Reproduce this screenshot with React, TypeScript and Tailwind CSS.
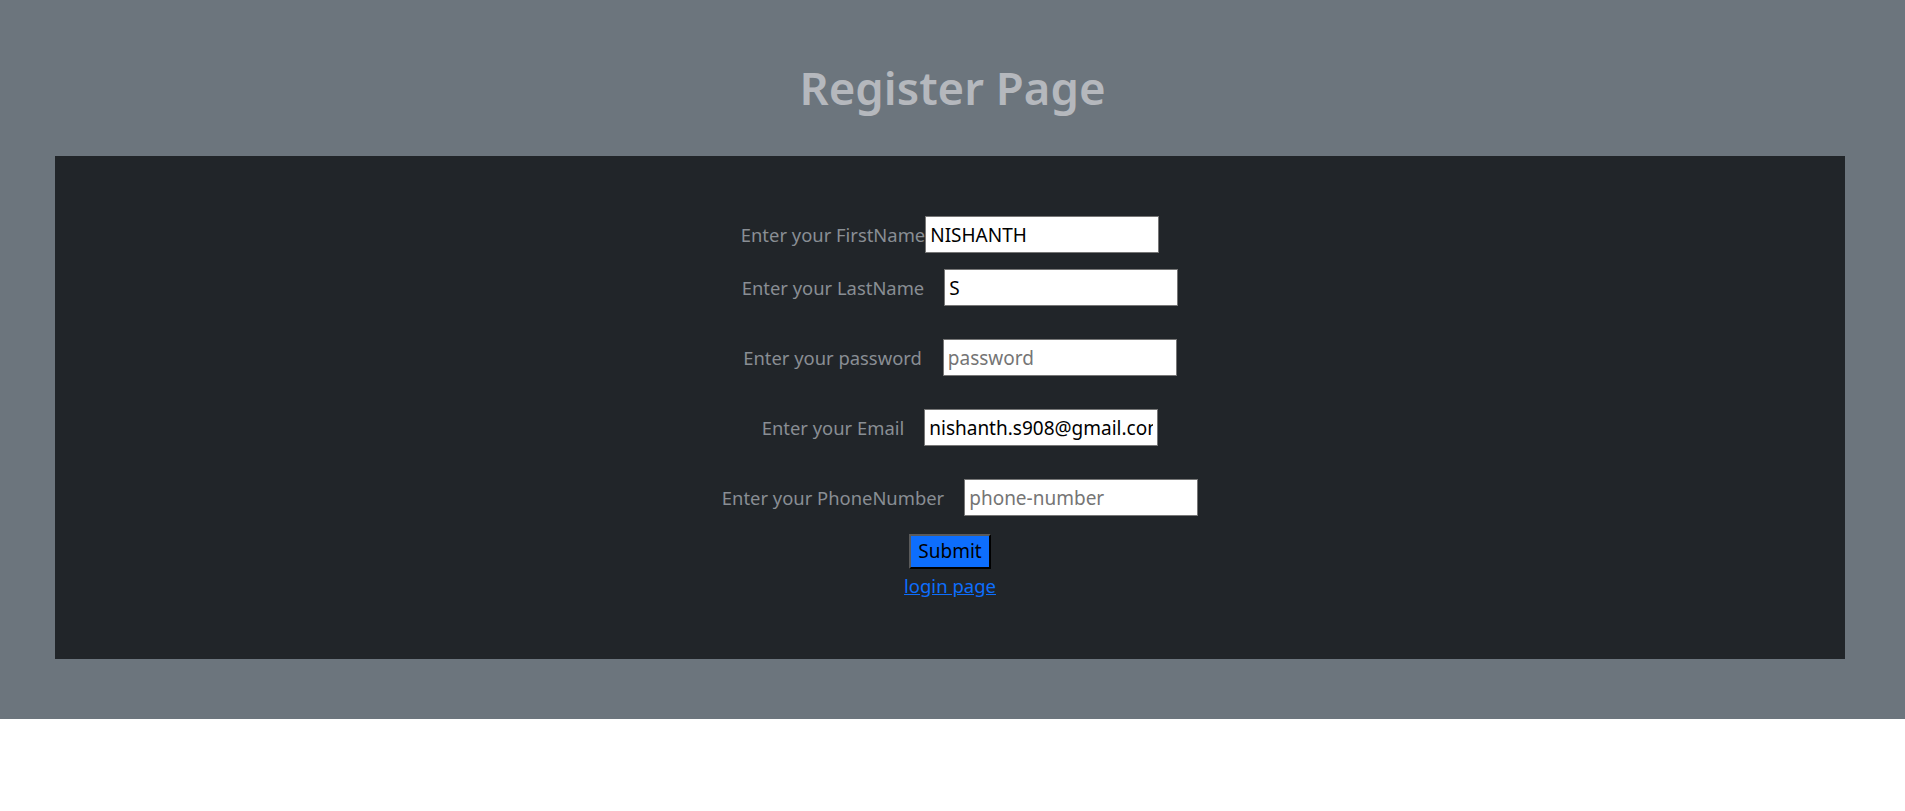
import React from "react";

const font = { fontFamily: '"Noto Sans", "Open Sans", sans-serif' };

function Row({ label, children, gap, shift }: { label: string; children: React.ReactNode; gap: string; shift?: boolean }) {
  return (
    <div className={`flex items-center justify-center ${gap} ${shift ? "ml-[20px]" : ""}`}>
      <span className="text-[18.4px] text-[#898e94] whitespace-nowrap">{label}</span>
      {children}
    </div>
  );
}

const inputCls =
  "h-[37px] w-[234px] bg-white border border-[#767676] px-[4px] text-[19px] text-black placeholder:text-[#757575] outline-none";

export default function App() {
  return (
    <div style={font} className="bg-white w-full min-h-[811px]">
      <div className="bg-[#6c757d] pb-[60px]">
        <div className="h-[156px] flex items-start justify-center pt-[58px]">
          <h1 className="text-[45.5px] leading-[58px] font-semibold text-[#b5b8bd]">Register Page</h1>
        </div>
        <div className="ml-[55px] mr-[60px] bg-[#212529] h-[503px] flex flex-col items-center pt-[60px]">
          <Row label="Enter your FirstName" gap="gap-0">
            <input className={inputCls} defaultValue="NISHANTH" />
          </Row>
          <div className="mt-[16px]">
            <Row label="Enter your LastName" gap="gap-[20px]" shift>
              <input className={inputCls} defaultValue="S" />
            </Row>
          </div>
          <div className="mt-[33px]">
            <Row label="Enter your password" gap="gap-[21px]" shift>
              <input className={inputCls} placeholder="password" type="text" />
            </Row>
          </div>
          <div className="mt-[33px]">
            <Row label="Enter your Email" gap="gap-[20px]" shift>
              <input className={inputCls} defaultValue="nishanth.s908@gmail.com" />
            </Row>
          </div>
          <div className="mt-[33px]">
            <Row label="Enter your PhoneNumber" gap="gap-[20px]" shift>
              <input className={inputCls} placeholder="phone-number" />
            </Row>
          </div>
          <button className="mt-[18px] h-[35px] w-[82px] bg-[#0d6efd] text-black text-[19px] leading-none border-2 border-t-[#5a5a5a] border-l-[#5a5a5a] border-r-black border-b-black">
            Submit
          </button>
          <a href="#" className="mt-[4px] text-[18.5px] text-[#0d6efd] underline leading-[26px]">login page</a>
        </div>
      </div>
    </div>
  );
}
